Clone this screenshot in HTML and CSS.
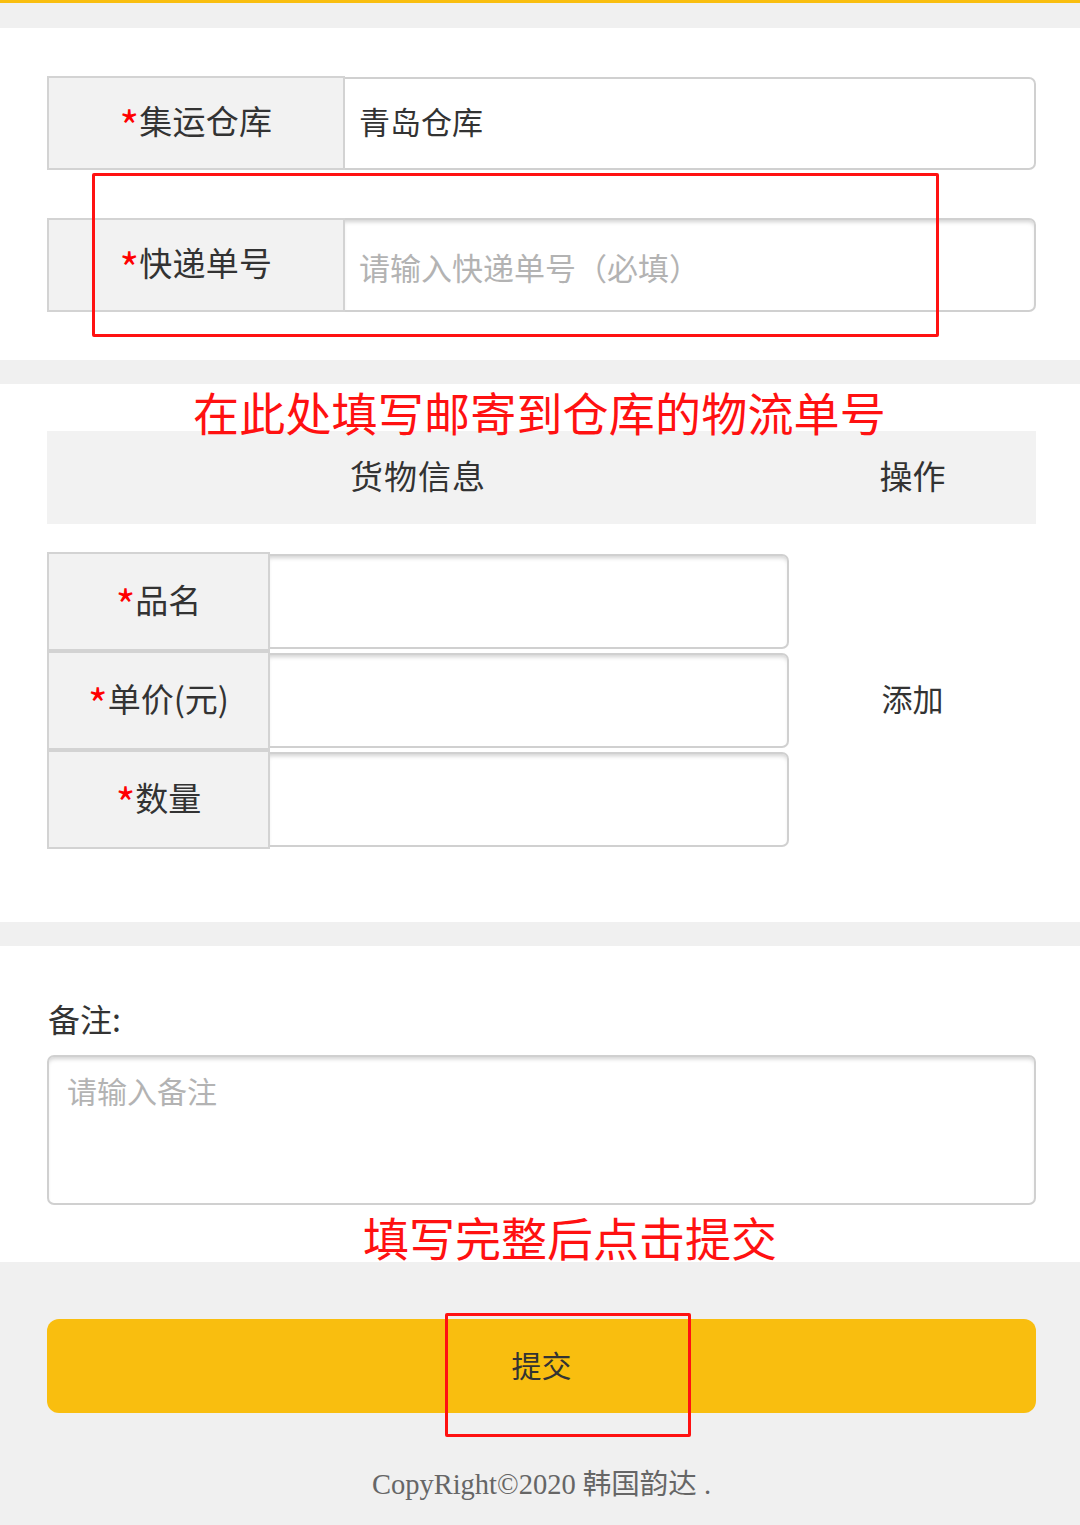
FILE: index.html
```html
<!DOCTYPE html>
<html lang="zh-CN">
<head>
<meta charset="utf-8">
<title>提交</title>
<link rel="stylesheet" href="styles.css">
</head>
<body>
<div class="topbar"></div>

<section class="panel panel-top">
  <div class="form-row">
    <div class="label"><span class="req">*</span>集运仓库</div>
    <div class="field field-static">青岛仓库</div>
  </div>
  <div class="form-row">
    <div class="label"><span class="req">*</span>快递单号</div>
    <div class="field field-input placeholder">请输入快递单号（必填）</div>
  </div>
  <div class="mark mark-express"></div>
</section>

<section class="panel panel-goods">
  <div class="note note-express">在此处填写邮寄到仓库的物流单号</div>
  <div class="goods-head">
    <div class="col-info">货物信息</div>
    <div class="col-op">操作</div>
  </div>
  <div class="goods-body">
    <div class="goods-rows">
      <div class="goods-row">
        <div class="glabel"><span class="req">*</span>品名</div>
        <div class="gfield"></div>
      </div>
      <div class="goods-row">
        <div class="glabel"><span class="req">*</span>单价(元)</div>
        <div class="gfield"></div>
      </div>
      <div class="goods-row">
        <div class="glabel"><span class="req">*</span>数量</div>
        <div class="gfield"></div>
      </div>
    </div>
    <div class="goods-op">添加</div>
  </div>
</section>

<section class="panel panel-remark">
  <div class="remark-title">备注:</div>
  <div class="remark-box placeholder">请输入备注</div>
  <div class="note note-submit">填写完整后点击提交</div>
</section>

<footer class="foot">
  <div class="submit-btn">提交</div>
  <div class="mark mark-submit"></div>
  <div class="copyright">CopyRight©2020 韩国韵达 .</div>
</footer>
</body>
</html>
```

FILE: styles.css
```css
* { box-sizing: border-box; }

html, body {
  margin: 0;
  padding: 0;
}

body {
  width: 1080px;
  background: #f0f0f0;
  font-family: "Noto Sans CJK SC", "Noto Sans", sans-serif;
  color: #333;
}

.topbar {
  height: 3px;
  background: #f9be0f;
  margin-bottom: 25px;
}

.panel {
  background: #fff;
  position: relative;
  padding: 0 44px 0 47px;
}

.panel-top {
  height: 332px;
  padding-top: 48px;
  display: flex;
  flex-direction: column;
  gap: 48px;
}

.form-row {
  display: flex;
  height: 94px;
}

.label {
  width: 298px;
  background: #f2f2f2;
  border: 2px solid #d3d3d3;
  display: flex;
  align-items: center;
  justify-content: center;
  font-size: 33px;
  padding-bottom: 6px;
  letter-spacing: 0.3px;
}

.req {
  color: #ff0000;
  font-size: 42px;
  line-height: 0;
  margin-right: 0;
  position: relative;
  top: 5px;
  letter-spacing: 0;
}

.field {
  flex: 1;
  border: 2px solid #d0d0d0;
  border-left: none;
  border-radius: 0 7px 7px 0;
  display: flex;
  align-items: center;
  padding-left: 14px;
  font-size: 31px;
}

.field-static {
  margin-top: 1px;
  padding-bottom: 6px;
}

.field-input {
  box-shadow: inset 0 4px 4px -2px rgba(0, 0, 0, 0.18);
  padding-top: 2px;
}

.placeholder {
  color: #b3b3b3;
}

.mark {
  position: absolute;
  border: 3px solid #ff1111;
  border-radius: 2px;
}

.mark-express {
  left: 92px;
  top: 145px;
  width: 847px;
  height: 164px;
}

.panel-goods {
  margin-top: 24px;
  height: 538px;
  padding-top: 47px;
}

.note {
  position: absolute;
  color: #ff1111;
  font-size: 46px;
  line-height: 46px;
  white-space: nowrap;
}

.note-express {
  left: 193px;
  top: 4px;
  letter-spacing: 0.2px;
}

.goods-head {
  height: 93px;
  background: #f2f2f2;
  display: flex;
  align-items: center;
  font-size: 33px;
  padding-bottom: 6px;
}

.col-info {
  width: 742px;
  text-align: center;
  letter-spacing: 1px;
}

.col-op {
  flex: 1;
  text-align: center;
}

.goods-body {
  margin-top: 28px;
  display: flex;
}

.goods-rows {
  width: 742px;
  display: flex;
  flex-direction: column;
}

.goods-row {
  display: flex;
  height: 99px;
}

.glabel {
  width: 223px;
  background: #f2f2f2;
  border: 2px solid #d3d3d3;
  display: flex;
  align-items: center;
  justify-content: center;
  font-size: 33px;
  padding-bottom: 6px;
}

.gfield {
  flex: 1;
  margin: 2px 0 2px 0;
  border: 2px solid #d0d0d0;
  border-left: none;
  border-radius: 0 7px 7px 0;
  box-shadow: inset 0 4px 4px -2px rgba(0, 0, 0, 0.18);
}

.goods-op {
  flex: 1;
  display: flex;
  align-items: center;
  justify-content: center;
  font-size: 31px;
  padding-bottom: 6px;
}

.panel-remark {
  margin-top: 24px;
  height: 316px;
  padding-top: 50px;
}

.remark-title {
  font-size: 32px;
  line-height: 44px;
  margin-left: 1px;
  margin-bottom: 15px;
}

.remark-box {
  height: 150px;
  border: 2px solid #d0d0d0;
  border-radius: 7px;
  box-shadow: inset 0 4px 4px -2px rgba(0, 0, 0, 0.18);
  padding: 13px 18px;
  font-size: 30px;
  line-height: 40px;
}

.note-submit {
  left: 363px;
  top: 267px;
}

.foot {
  position: relative;
  padding: 57px 44px 0 47px;
  height: 263px;
}

.submit-btn {
  height: 94px;
  background: #f9be0f;
  border-radius: 12px;
  display: flex;
  align-items: center;
  justify-content: center;
  font-size: 30px;
  padding-bottom: 4px;
}

.mark-submit {
  left: 445px;
  top: 51px;
  width: 246px;
  height: 124px;
}

.copyright {
  margin-top: 48px;
  text-align: center;
  font-family: "Liberation Serif", "Noto Sans CJK SC", serif;
  font-size: 28.5px;
  color: #666;
}
```
